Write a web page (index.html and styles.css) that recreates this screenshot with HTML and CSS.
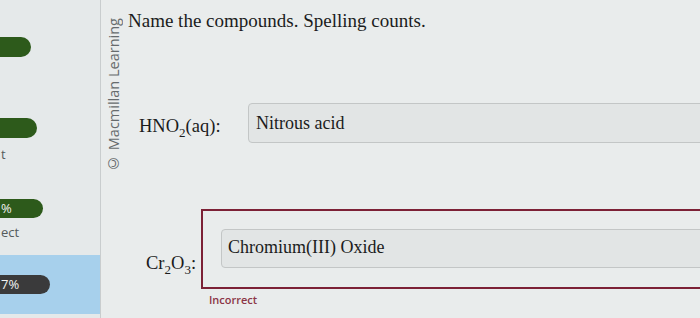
FILE: index.html
```html
<!DOCTYPE html>
<html>
<head>
<meta charset="utf-8">
<link rel="stylesheet" href="styles.css">
</head>
<body>
<div class="page">
  <aside class="sidebar">
    <div class="bar bar-green w1"></div>
    <div class="bar bar-green w2"></div>
    <div class="side-label lbl-t">t</div>
    <div class="bar bar-green w3"><span class="bar-text">%</span></div>
    <div class="side-label lbl-ect">ect</div>
    <div class="side-active">
      <div class="bar bar-dark w4"><span class="bar-text">7%</span></div>
    </div>
  </aside>
  <div class="credit"><span class="credit-text">© Macmillan Learning</span></div>
  <main class="content">
    <h1 class="title">Name the compounds. Spelling counts.</h1>
    <div class="row row-one">
      <div class="formula f-one">HNO<sub>2</sub>(aq):</div>
      <div class="answer a-one">Nitrous acid</div>
    </div>
    <div class="row row-two">
      <div class="formula f-two">Cr<sub>2</sub>O<sub>3</sub>:</div>
      <div class="wrong-box">
        <div class="answer a-two">Chromium(III) Oxide</div>
      </div>
    </div>
    <div class="feedback">Incorrect</div>
  </main>
</div>
</body>
</html>
```

FILE: styles.css
```css
html, body {
  margin: 0;
  padding: 0;
}
body {
  width: 700px;
  height: 318px;
  overflow: hidden;
  background: #e9ecec;
}
.page {
  display: flex;
  height: 318px;
}
.sidebar {
  width: 100px;
  flex: 0 0 100px;
  border-right: 1px solid #c9cdce;
  background: #e5e9ea;
  padding-top: 37px;
  box-sizing: content-box;
  display: flex;
  flex-direction: column;
  overflow: hidden;
  font-family: "Open Sans", "Liberation Sans", sans-serif;
}
.bar {
  height: 20px;
  border-radius: 0 10px 10px 0;
  display: flex;
  align-items: center;
  overflow: hidden;
}
.bar-green { background: #2d5a1b; }
.bar-dark { background: #3a3a3b; }
.w1 { width: 31px; }
.w2 { width: 37px; margin-top: 61px; }
.w3 { width: 43px; margin-top: 37px; height: 19px; }
.w4 { width: 50px; height: 19px; }
.bar-text {
  color: #f2f2f2;
  font-size: 13px;
  line-height: 19px;
  white-space: nowrap;
  padding-left: 1px;
}
.side-label {
  color: #555b5c;
  font-size: 13px;
  line-height: 16px;
  padding-left: 1px;
}
.lbl-t { margin-top: 8px; }
.lbl-ect { margin-top: 6px; }
.side-active {
  margin-top: 15px;
  height: 59px;
  padding-top: 20px;
  box-sizing: border-box;
  background: #a7d0ec;
}
.credit {
  width: 27px;
  flex: 0 0 27px;
  padding-top: 18px;
  box-sizing: border-box;
}
.credit-text {
  display: block;
  writing-mode: vertical-rl;
  transform: rotate(180deg);
  margin-left: 4px;
  font-family: "Open Sans", "Liberation Sans", sans-serif;
  font-size: 14.5px;
  line-height: 18px;
  color: #666b6c;
  white-space: nowrap;
}
.content {
  flex: 1;
  min-width: 0;
  overflow: hidden;
  font-family: "Liberation Serif", "Times New Roman", serif;
  color: #1b1c1c;
}
.title {
  margin: 0;
  padding-top: 9px;
  font-size: 19px;
  font-weight: normal;
  line-height: 24px;
  white-space: nowrap;
}
.row {
  display: flex;
}
.row-one {
  margin-top: 70px;
  align-items: flex-start;
}
.row-two {
  margin-top: 66px;
}
.formula {
  font-size: 18.5px;
  line-height: 22px;
  white-space: nowrap;
}
.formula sub {
  font-size: 13px;
  line-height: 0;
  vertical-align: -5px;
}
.f-one {
  margin-left: 11px;
  margin-top: 12px;
  width: 109px;
  flex: 0 0 109px;
}
.f-two {
  align-self: flex-end;
  margin-left: 18px;
  margin-right: 5px;
  margin-bottom: 15px;
}
.answer {
  flex: 0 0 560px;
  width: 560px;
  box-sizing: border-box;
  border: 1px solid #c3c6c6;
  border-radius: 4px;
  background: #e2e5e5;
  font-size: 18px;
  line-height: 22px;
  white-space: nowrap;
}
.a-one {
  padding: 8px 0 8px 7px;
}
.a-two {
  padding: 6px 0 9px 6px;
}
.wrong-box {
  flex: 0 0 620px;
  border: 2px solid #7c2136;
  padding: 18px 0 19px 18px;
}
.feedback {
  margin-left: 81px;
  margin-top: 4px;
  font-family: "Open Sans", "Liberation Sans", sans-serif;
  font-size: 11px;
  font-weight: 600;
  line-height: 14px;
  color: #8b3546;
}
```
